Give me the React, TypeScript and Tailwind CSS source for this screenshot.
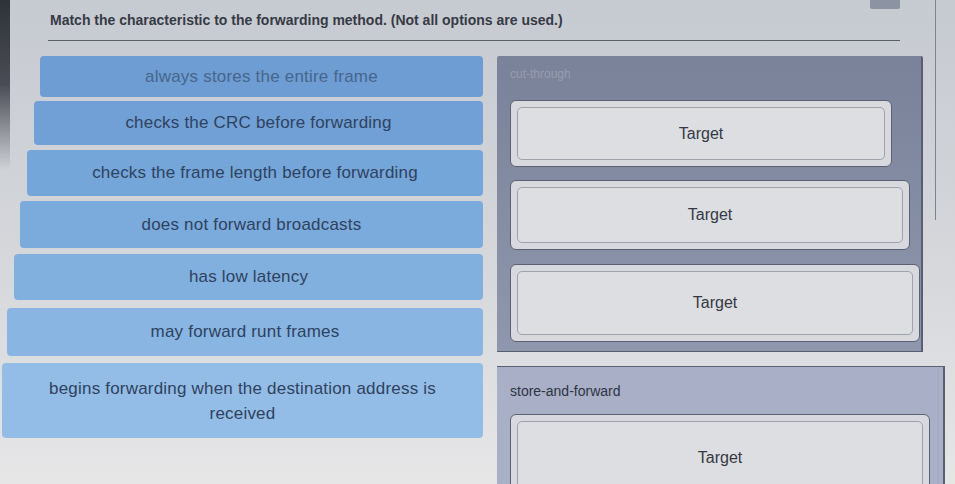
import { clsx } from "clsx";

type Option = { label: string; className: string };

// draggable answer tiles, left column
const options: Option[] = [
  { label: "always stores the entire frame", className: "w-[443px] h-[41px] bg-[#6d9dd3] text-[#48658c]" },
  { label: "checks the CRC before forwarding", className: "mt-[4px] w-[449px] h-[44px] bg-[#70a0d5] text-[#2f4260]" },
  { label: "checks the frame length before forwarding", className: "mt-[5px] w-[456px] h-[46px] bg-[#75a6d9] text-[#2f4260]" },
  { label: "does not forward broadcasts", className: "mt-[5px] w-[463px] h-[47px] bg-[#7babdc] text-[#2f4260]" },
  { label: "has low latency", className: "mt-[6px] w-[469px] h-[46px] bg-[#81b0df] text-[#2f4260]" },
  { label: "may forward runt frames", className: "mt-[8px] w-[476px] h-[48px] bg-[#88b5e2] text-[#2f4260]" },
  {
    label: "begins forwarding when the destination address is received",
    className: "mt-[7px] w-[481px] h-[75px] bg-[#93bde6] text-[#2f4260] px-[20px] leading-[25px]",
  },
];

const Target = ({ className }: { className: string }) => (
  <div className={clsx("rounded-[6px] border border-[#5d6172] bg-[#d7d9de] p-[6px]", className)}>
    <div className="flex h-full items-center justify-center rounded-[5px] border border-[#9ea2ac] bg-[#dcdee2]">
      <span className="text-[16px] text-[#353944]">Target</span>
    </div>
  </div>
);

export default function App() {
  return (
    <div
      className="relative h-[484px] w-[955px] overflow-hidden bg-linear-to-b from-[#c6cad1] via-[#d4d6da] to-[#e6e6e7]"
      style={{ fontFamily: '"Liberation Sans", Arial, sans-serif' }}
    >
      {/* screen bezel edge */}
      <div className="absolute left-0 top-0 h-[170px] w-[10px] bg-linear-to-b from-[#2f3238] via-[#4a4d55] to-transparent" />

      <div className="flex">
        <div className="ml-[48px] flex h-[41px] w-[852px] items-start justify-between border-b border-[#5b5f69] pl-[2px]">
          <p className="mt-[10px] text-[14px] font-bold tracking-[0px] text-[#363a45]">
            Match the characteristic to the forwarding method. (Not all options are used.)
          </p>
          <div className="mt-[-2px] h-[11px] w-[30px] rounded-[2px] bg-[#8c93a2]" />
        </div>
        <div className="ml-[35px] h-[220px] w-[20px] border-l border-[#7f838d]" />
      </div>

      <div className="mt-[-164px] flex">
        {/* answer options */}
        <div className="flex w-[483px] flex-col items-end">
          {options.map((o) => (
            <div
              key={o.label}
              className={clsx(
                "flex items-center justify-center rounded-[4px] text-center text-[17px] tracking-[0.2px]",
                o.className
              )}
            >
              {o.label}
            </div>
          ))}
        </div>

        {/* drop zones */}
        <div className="ml-[14px] flex flex-col">
          <div className="h-[296px] w-[426px] rounded-t-[2px] border-r-2 border-b border-[#5a5f70] bg-linear-to-b from-[#7a8299] to-[#8f97ae] pl-[13px] pt-[9px]">
            <p className="text-[12px] text-[#979db0]">cut-through</p>
            <Target className="mt-[17px] h-[67px] w-[382px]" />
            <Target className="mt-[13px] h-[70px] w-[400px]" />
            <Target className="mt-[14px] h-[78px] w-[410px]" />
          </div>

          <div className="mt-[14px] h-[140px] w-[448px] border-t border-r-2 border-[#5a5f70] bg-[#a8afc7] pl-[13px] pt-[14px]">
            <p className="text-[14px] text-[#2f3444]">store-and-forward</p>
            <Target className="mt-[12px] h-[88px] w-[420px]" />
          </div>
        </div>
      </div>
    </div>
  );
}
